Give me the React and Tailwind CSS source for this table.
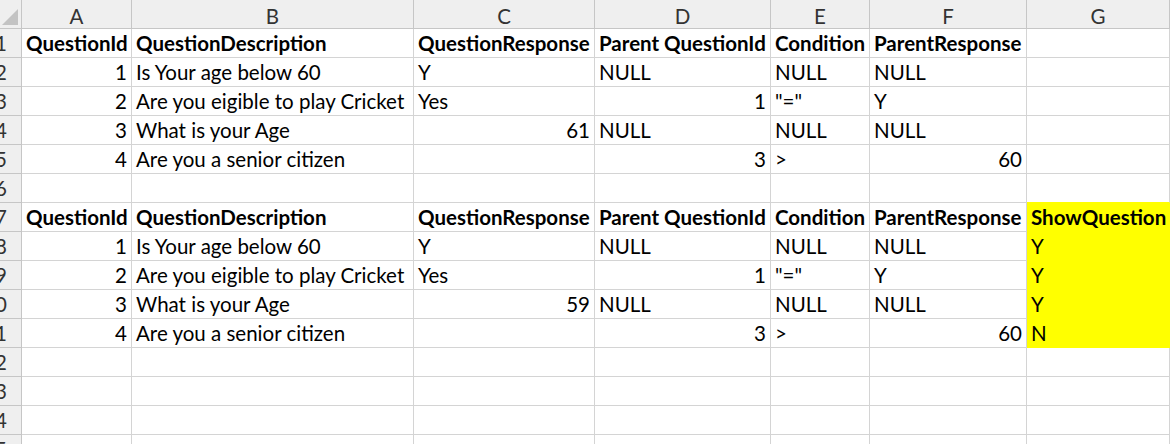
import React from 'react';

const COLS = ['A', 'B', 'C', 'D', 'E', 'F', 'G'];
const GRID = 'grid grid-cols-[22px_110px_282px_181px_176px_99px_157px_1fr]';

const HEAD = ['QuestionId', 'QuestionDescription', 'QuestionResponse', 'Parent QuestionId', 'Condition', 'ParentResponse'];

// each cell: [text, align] ; 'r' = number, right aligned
const rows = [
  { n: 1, head: true, cells: HEAD },
  { n: 2, cells: [['1', 'r'], 'Is Your age below 60', 'Y', 'NULL', 'NULL', 'NULL'] },
  { n: 3, cells: [['2', 'r'], 'Are you eigible to play Cricket', 'Yes', ['1', 'r'], '"="', 'Y'] },
  { n: 4, cells: [['3', 'r'], 'What is your Age', ['61', 'r'], 'NULL', 'NULL', 'NULL'] },
  { n: 5, cells: [['4', 'r'], 'Are you a senior citizen', '', ['3', 'r'], '>', ['60', 'r']] },
  { n: 6, cells: [], beforeYellow: true },
  { n: 7, head: true, cells: [...HEAD, 'ShowQuestion'], yellow: true },
  { n: 8, cells: [['1', 'r'], 'Is Your age below 60', 'Y', 'NULL', 'NULL', 'NULL', 'Y'], yellow: true },
  { n: 9, cells: [['2', 'r'], 'Are you eigible to play Cricket', 'Yes', ['1', 'r'], '"="', 'Y', 'Y'], yellow: true },
  { n: 10, cells: [['3', 'r'], 'What is your Age', ['59', 'r'], 'NULL', 'NULL', 'NULL', 'Y'], yellow: true },
  { n: 11, cells: [['4', 'r'], 'Are you a senior citizen', '', ['3', 'r'], '>', ['60', 'r'], 'N'], yellow: true },
  { n: 12, cells: [] },
  { n: 13, cells: [] },
  { n: 14, cells: [] },
  { n: 15, cells: [] },
];

const Cell = ({ value, bold, yellow, yellowBottom }) => {
  const text = Array.isArray(value) ? value[0] : value || '';
  const right = Array.isArray(value) && value[1] === 'r';
  return (
    <div
      className={`h-[29px] border-r border-b border-[#d4d4d4] flex items-end pb-[2px] px-[4px] overflow-hidden whitespace-nowrap ${
        right ? 'justify-end' : 'justify-start'
      } ${bold ? 'font-bold' : ''} ${yellow ? 'bg-[#ffff00] border-[#ffff00]' : ''} ${
        yellowBottom ? 'border-b-[#ffff00]' : ''
      }`}
    >
      {text}
    </div>
  );
};

export default function App() {
  return (
    <div className="w-[1170px] h-[444px] overflow-hidden bg-white text-black text-[20.5px] leading-[24px] font-['Lato',sans-serif]">
      {/* column letters */}
      <div className={`${GRID} h-[29px] bg-[#efefef] border-b border-[#c6c6c6] text-[#333]`}>
        <div className="border-r border-[#c6c6c6] relative overflow-hidden">
          <div className="absolute right-[3px] bottom-[3px] w-0 h-0 border-l-[16px] border-l-transparent border-b-[16px] border-b-[#c3c3c3]" />
        </div>
        {COLS.map((c) => (
          <div key={c} className="border-r border-[#c6c6c6] flex items-center justify-center pt-[3px]">
            {c}
          </div>
        ))}
      </div>

      {rows.map((row) => (
        <div key={row.n} className={GRID}>
          <div className="h-[29px] bg-[#efefef] border-r border-b border-[#c6c6c6] text-[#333] flex items-end justify-end pr-[14px] pb-[2px] overflow-hidden whitespace-nowrap">
            {row.n}
          </div>
          {COLS.map((c, i) => {
            const isG = i === 6;
            return (
              <Cell
                key={c}
                value={row.cells[i]}
                bold={row.head}
                yellow={isG && row.yellow}
                yellowBottom={isG && row.beforeYellow}
              />
            );
          })}
        </div>
      ))}
    </div>
  );
}
